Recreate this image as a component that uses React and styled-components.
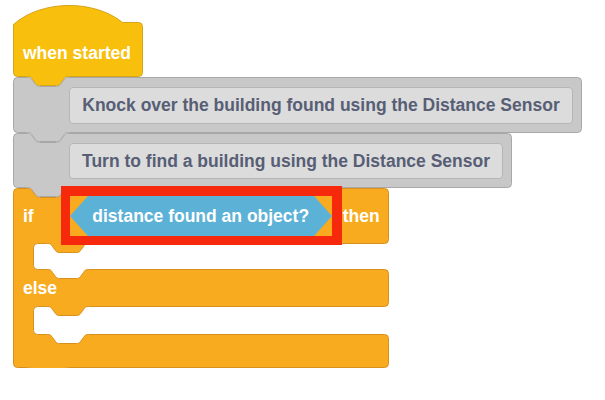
import React from 'react';
import styled, { createGlobalStyle } from 'styled-components';

const GlobalStyle = createGlobalStyle`
  html, body {
    margin: 0;
    background: #ffffff;
  }
  body {
    font-family: "Liberation Sans", Arial, sans-serif;
  }
`;

// notch geometry shared by every stack block
const NOTCH = 14;
const NOTCH_W = 41;
const ARM = 20;

// cavity along a top edge, drawn left to right
const notch = 'c 3,0 4,1 5,3 l 3,4 c 1,1.5 2,2 4,2 h 17 c 2,0 3,-0.5 4,-2 l 3,-4 c 1,-2 2,-3 5,-3';
// tab under a bottom edge, drawn right to left
const tab = 'c -3,0 -4,1 -5,3 l -3,4 c -1,1.5 -2,2 -4,2 h -17 c -2,0 -3,-0.5 -4,-2 l -3,-4 c -1,-2 -2,-3 -5,-3';

const hatPath = (w, h) =>
	`M 0,24 C 28,-1 81,-1 109,22 H ${w - 4} Q ${w},22 ${w},26 V ${h - 4} Q ${w},${h} ${w - 4},${h} ` +
	`H ${NOTCH + NOTCH_W} ${tab} H 4 Q 0,${h} 0,${h - 4} Z`;

const stackPath = (w, h) =>
	`M 0,4 Q 0,0 4,0 H ${NOTCH} ${notch} H ${w - 4} Q ${w},0 ${w},4 V ${h - 4} Q ${w},${h} ${w - 4},${h} ` +
	`H ${NOTCH + NOTCH_W} ${tab} H 4 Q 0,${h} 0,${h - 4} Z`;

const ifElsePath = (w, rows) => {
	const [a, m1, b, m2, c] = rows;
	const y1 = a;
	const y2 = y1 + m1;
	const y3 = y2 + b;
	const y4 = y3 + m2;
	const y5 = y4 + c - 1;
	const armTab = ARM + NOTCH + NOTCH_W;
	return (
		`M 0,4 Q 0,0 4,0 H ${NOTCH} ${notch} H ${w - 4} Q ${w},0 ${w},4 ` +
		`V ${y1 - 4} Q ${w},${y1} ${w - 4},${y1} H ${armTab} ${tab} H ${ARM + 4} Q ${ARM},${y1} ${ARM},${y1 + 4} ` +
		`V ${y2 - 4} Q ${ARM},${y2} ${ARM + 4},${y2} H ${ARM + NOTCH} ${notch} H ${w - 4} Q ${w},${y2} ${w},${y2 + 4} ` +
		`V ${y3 - 4} Q ${w},${y3} ${w - 4},${y3} H ${armTab} ${tab} H ${ARM + 4} Q ${ARM},${y3} ${ARM},${y3 + 4} ` +
		`V ${y4 - 4} Q ${ARM},${y4} ${ARM + 4},${y4} H ${ARM + NOTCH} ${notch} H ${w - 4} Q ${w},${y4} ${w},${y4 + 4} ` +
		`V ${y5 - 4} Q ${w},${y5} ${w - 4},${y5} H ${NOTCH + NOTCH_W} ${tab} H 4 Q 0,${y5} 0,${y5 - 4} Z`
	);
};

const Canvas = styled.div`
	display: flex;
	flex-direction: column;
	align-items: flex-start;
	padding-left: 13px;
`;

const Shape = styled.svg`
	position: absolute;
	left: 0;
	top: 0;
	overflow: visible;
	pointer-events: none;
`;

const BlockFrame = styled.div`
	position: relative;
	box-sizing: border-box;
	width: ${p => p.$w}px;
	height: ${p => p.$h}px;
`;

const HatBlock = styled(BlockFrame)`
	padding: 43px 10px 0;
`;

const StackBlock = styled(BlockFrame)`
	display: flex;
	padding: 10px 9px 9px 56px;
`;

const CBlock = styled(BlockFrame)`
	display: flex;
	flex-direction: column;
`;

const Label = styled.span`
	position: relative;
	color: #ffffff;
	font-weight: bold;
	font-size: 17.5px;
	line-height: 20px;
	white-space: nowrap;
	margin-left: ${p => p.$gap || 0}px;
`;

const TextField = styled.div`
	position: relative;
	flex: 1;
	display: flex;
	align-items: center;
	justify-content: center;
	box-sizing: border-box;
	background: #dcdcdc;
	border: 1px solid #b6b6b6;
	border-radius: 4px;
	color: #575e75;
	font-weight: bold;
	font-size: 17.5px;
	white-space: nowrap;
`;

const CRow = styled.div`
	position: relative;
	display: flex;
	align-items: center;
	height: ${p => p.$h}px;
	padding-left: 10px;
`;

const Mouth = styled.div`
	height: ${p => p.$h}px;
`;

const Condition = styled.div`
	position: relative;
	display: flex;
	align-items: center;
	justify-content: center;
	width: 262px;
	height: 40px;
	margin-left: 36px;

	&::after {
		content: '';
		position: absolute;
		inset: -10px -10px -9px -9px;
		border-style: solid;
		border-color: #f7290c;
		border-width: 10px 10px 9px 9px;
	}
`;

const Hexagon = styled.svg`
	position: absolute;
	left: 0;
	top: 0;
`;

const BlockShape = ({ d, w, h, fill, stroke }) => (
	<Shape width={w} height={h}>
		<path d={d} transform="translate(0.5 0.5)" fill={fill} stroke={stroke} strokeWidth="1" />
	</Shape>
);

const Hat = ({ width, height, children }) => (
	<HatBlock $w={width} $h={height}>
		<BlockShape d={hatPath(width - 1, height - 1)} w={width} h={height} fill="#f8c00c" stroke="#d6a418" />
		<Label>{children}</Label>
	</HatBlock>
);

const Statement = ({ width, height, children }) => (
	<StackBlock $w={width} $h={height}>
		<BlockShape d={stackPath(width - 1, height - 1)} w={width} h={height} fill="#c8c8c8" stroke="#a8a8a8" />
		<TextField>{children}</TextField>
	</StackBlock>
);

const ROWS = [55, 26, 37, 28, 34];

const IfElse = ({ width, condition }) => {
	const height = ROWS.reduce((s, r) => s + r, 0);
	return (
		<CBlock $w={width} $h={height}>
			<BlockShape d={ifElsePath(width - 1, ROWS)} w={width} h={height} fill="#f8ab1e" stroke="#d8901c" />
			<CRow $h={ROWS[0]}>
				<Label>if</Label>
				<Condition>
					<Hexagon width="262" height="40">
						<polygon points="0,20 18,0 244,0 262,20 244,40 18,40" fill="#5cb1d6" />
					</Hexagon>
					<Label>{condition}</Label>
				</Condition>
				<Label $gap={11}>then</Label>
			</CRow>
			<Mouth $h={ROWS[1]} />
			<CRow $h={ROWS[2]}>
				<Label>else</Label>
			</CRow>
			<Mouth $h={ROWS[3]} />
		</CBlock>
	);
};

const App = () => (
	<>
		<GlobalStyle />
		<Canvas>
			<Hat width={130} height={77}>when started</Hat>
			<Statement width={569} height={56}>Knock over the building found using the Distance Sensor</Statement>
			<Statement width={499} height={55}>Turn to find a building using the Distance Sensor</Statement>
			<IfElse width={376} condition="distance found an object?" />
		</Canvas>
	</>
);

export default App;
